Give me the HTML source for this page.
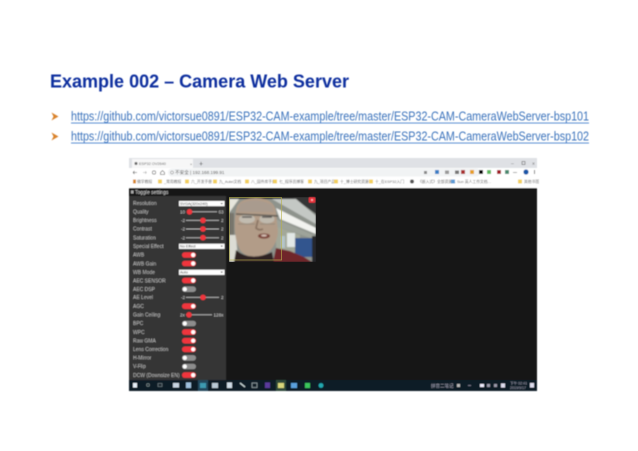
<!DOCTYPE html>
<html lang="en">
<head>
<meta charset="utf-8">
<title>Example 002 – Camera Web Server</title>
<style>
html,body{margin:0;padding:0;background:#fff;width:638px;height:451px;overflow:hidden}
svg{display:block}
text{font-family:"Liberation Sans","Noto Sans CJK SC",sans-serif}
.l{font-size:5px;fill:#bdbdbd}
.m{font-size:4.6px;fill:#cfcfcf}
.b{font-size:3.8px;fill:#666}
.s{fill:#fff}
.st{font-size:3.8px;fill:#333}
.on{fill:#f0353c}
.off{fill:#8d8d8d}
.k{fill:#fff}
.tr{stroke:#b0b0b0;stroke-width:1}
.th{fill:#f0353c}
.lnk{font-size:12.5px;fill:#3a72bb}
</style>
</head>
<body>
<svg width="638" height="451" viewBox="0 0 638 451" xmlns="http://www.w3.org/2000/svg">
<defs>
<filter id="bl" x="-5%" y="-20%" width="110%" height="140%"><feGaussianBlur stdDeviation="0.4"/></filter>
<filter id="bs" x="-5%" y="-5%" width="110%" height="110%"><feGaussianBlur stdDeviation="0.5"/></filter>
<filter id="bf" x="-10%" y="-10%" width="120%" height="120%"><feGaussianBlur stdDeviation="0.9"/></filter>
<clipPath id="cam"><rect x="229" y="197" width="87" height="65"/></clipPath>
</defs>
<rect width="638" height="451" fill="#fff"/>

<g filter="url(#bl)">
<text x="50" y="87.5" font-size="18.5" font-weight="700" fill="#0b2e9e" textLength="299" lengthAdjust="spacingAndGlyphs">Example 002 – Camera Web Server</text>
<path d="M51.5 112.5l7 4-7 4 2-4z" fill="#d9822b"/>
<path d="M51.5 132.5l7 4-7 4 2-4z" fill="#d9822b"/>
<text class="lnk" x="71" y="120.5" textLength="518" lengthAdjust="spacingAndGlyphs">https://github.com/victorsue0891/ESP32-CAM-example/tree/master/ESP32-CAM-CameraWebServer-bsp101</text>
<rect x="71" y="122.6" width="518" height="0.9" fill="#4a82cc"/>
<text class="lnk" x="71" y="140.5" textLength="518" lengthAdjust="spacingAndGlyphs">https://github.com/victorsue0891/ESP32-CAM-example/tree/master/ESP32-CAM-CameraWebServer-bsp102</text>
<rect x="71" y="142.6" width="518" height="0.9" fill="#4a82cc"/>
</g>

<g filter="url(#bs)">
<!-- browser chrome -->
<rect x="129" y="158" width="408" height="10" fill="#dfe1e5"/>
<rect x="129" y="168" width="408" height="20" fill="#fff"/>
<rect x="132" y="159" width="61" height="9" fill="#f7f7f7"/>
<circle cx="136" cy="163.5" r="1.5" fill="#666"/>
<text class="b" x="139" y="165">ESP32 OV2640</text>
<text class="b" x="190" y="165.5">×</text>
<text x="199" y="166" font-size="7" fill="#444">+</text>
<text x="511" y="165" font-size="5" fill="#666">–</text>
<rect x="522" y="161.5" width="3" height="3" fill="none" stroke="#666" stroke-width=".6"/>
<text x="532" y="165.5" font-size="5" fill="#666">×</text>

<path d="M133 172.5h4M133 172.5l1.5-1.5M133 172.5l1.5 1.5" stroke="#555" stroke-width=".6" fill="none"/>
<path d="M143 172.5h3.5M146.5 172.5l-1.2-1.2M146.5 172.5l-1.2 1.2" stroke="#aaa" stroke-width=".6" fill="none"/>
<circle cx="154" cy="172.5" r="1.7" fill="none" stroke="#555" stroke-width=".6"/>
<path d="M160.5 172.5l2-2 2 2v2h-4z" fill="none" stroke="#555" stroke-width=".6"/>
<rect x="168" y="168.5" width="312" height="8" rx="4" fill="#f1f3f4"/>
<circle cx="172" cy="172.5" r="1.5" fill="none" stroke="#666" stroke-width=".5"/>
<text x="175" y="174.2" font-size="4.6" fill="#555">不安全 | 192.168.199.91</text>
<rect x="424" y="171" width="3" height="3" fill="#888"/>
<rect x="435" y="170" width="4" height="4" fill="#3a7fc5"/>
<rect x="445" y="170.5" width="4" height="3.5" fill="#999"/>
<rect x="455" y="170.5" width="4" height="3.5" fill="#777"/>
<rect x="461" y="170" width="4" height="4" fill="#a33"/>
<rect x="470" y="170" width="4" height="4" fill="#e6a02c"/>
<rect x="479" y="170" width="4" height="4" fill="#111"/>
<rect x="487" y="170" width="4" height="4" fill="#5cb85c"/>
<rect x="497" y="170" width="4" height="4" fill="#a3202c"/>
<rect x="505" y="170" width="4" height="4" fill="#4a8a70"/>
<rect x="513" y="172" width="4" height="1" fill="#aaa"/>
<circle cx="526" cy="172" r="2.6" fill="#1257a8"/>
<rect x="534" y="170" width="1" height="4" fill="#777"/>

<!-- bookmarks -->
<rect x="133" y="179.5" width="3" height="4" fill="#d88a2c"/>
<text class="b" x="137" y="183">佛学教程</text>
<rect x="158" y="179.5" width="4" height="4" fill="#f2cf5b"/><text class="b" x="164" y="183">_常用教程</text>
<rect x="185" y="179.5" width="4" height="4" fill="#f2cf5b"/><text class="b" x="191" y="183">六_开发手册</text>
<rect x="213" y="179.5" width="4" height="4" fill="#f2cf5b"/><text class="b" x="219" y="183">九_Autel文档</text>
<rect x="245" y="179.5" width="4" height="4" fill="#f2cf5b"/><text class="b" x="251" y="183">八_固件库手册</text>
<rect x="273" y="179.5" width="4" height="4" fill="#f2cf5b"/><text class="b" x="279" y="183">七_程序员博客</text>
<rect x="308" y="179.5" width="4" height="4" fill="#f2cf5b"/><text class="b" x="314" y="183">九_项目产品</text>
<rect x="334" y="179.5" width="4" height="4" fill="#f2cf5b"/><text class="b" x="340" y="183">十_博士研究资源</text>
<rect x="369" y="179.5" width="4" height="4" fill="#f2cf5b"/><text class="b" x="375" y="183">十_在ESP32入门</text>
<circle cx="412" cy="181.5" r="2" fill="#555"/><text class="b" x="418" y="183">《嵌入式》全部资源…</text>
<rect x="451" y="179.5" width="4" height="4" fill="#5b9bd5"/><text class="b" x="457" y="183">Sun 英人工作文档…</text>
<rect x="518" y="179.5" width="4" height="4" fill="#f2cf5b"/><text class="b" x="524" y="183">其他书签</text>

<!-- page -->
<rect x="129" y="188" width="408" height="192" fill="#171717"/>
<rect x="129" y="188" width="97" height="192" fill="#363636"/>
<rect x="129" y="188" width="97" height="8" fill="#171717"/>
<rect x="131" y="190.5" width="2.5" height="3" fill="#aaa"/>
<text x="135" y="193.8" font-size="5" fill="#ddd">Toggle settings</text>

<!-- labels -->
<text class="l" x="133" y="205">Resolution</text>
<text class="l" x="133" y="213.5">Quality</text>
<text class="l" x="133" y="222">Brightness</text>
<text class="l" x="133" y="230.7">Contrast</text>
<text class="l" x="133" y="239.4">Saturation</text>
<text class="l" x="133" y="248">Special Effect</text>
<text class="l" x="133" y="256.7">AWB</text>
<text class="l" x="133" y="265.3">AWB Gain</text>
<text class="l" x="133" y="274">WB Mode</text>
<text class="l" x="133" y="282.3">AEC SENSOR</text>
<text class="l" x="133" y="291">AEC DSP</text>
<text class="l" x="133" y="299.2">AE Level</text>
<text class="l" x="133" y="307.8">AGC</text>
<text class="l" x="133" y="316.5">Gain Ceiling</text>
<text class="l" x="133" y="325.2">BPC</text>
<text class="l" x="133" y="333.8">WPC</text>
<text class="l" x="133" y="342.4">Raw GMA</text>
<text class="l" x="133" y="351">Lens Correction</text>
<text class="l" x="133" y="359.6">H-Mirror</text>
<text class="l" x="133" y="368.2">V-Flip</text>
<text class="l" x="133" y="376.9">DCW (Downsize EN)</text>

<!-- selects -->
<rect class="s" x="179" y="201" width="45.5" height="5.2"/><text class="st" x="180" y="205">SVGA(320x240)</text><path d="M220.5 203l1.2 1.4 1.2-1.4z" fill="#222"/>
<rect class="s" x="179" y="243.7" width="45.5" height="5.2"/><text class="st" x="180" y="247.6">No Effect</text><path d="M220.5 245.6l1.2 1.4 1.2-1.4z" fill="#222"/>
<rect class="s" x="179" y="269.7" width="45.5" height="5.2"/><text class="st" x="180" y="273.6">Auto</text><path d="M220.5 271.6l1.2 1.4 1.2-1.4z" fill="#222"/>

<!-- sliders -->
<text class="m" x="180" y="213.4">10</text><line class="tr" x1="187" y1="211.8" x2="217" y2="211.8"/><circle class="th" cx="189.5" cy="211.8" r="2.8"/><text class="m" x="218.5" y="213.4">63</text>
<text class="m" x="181" y="222">-2</text><line class="tr" x1="186" y1="220.4" x2="219" y2="220.4"/><circle class="th" cx="203" cy="220.4" r="2.8"/><text class="m" x="221" y="222">2</text>
<text class="m" x="181" y="230.6">-2</text><line class="tr" x1="186" y1="229" x2="219" y2="229"/><circle class="th" cx="203" cy="229" r="2.8"/><text class="m" x="221" y="230.6">2</text>
<text class="m" x="181" y="239.3">-2</text><line class="tr" x1="186" y1="237.7" x2="219" y2="237.7"/><circle class="th" cx="203" cy="237.7" r="2.8"/><text class="m" x="221" y="239.3">2</text>
<text class="m" x="181" y="299">-2</text><line class="tr" x1="186" y1="297.4" x2="219" y2="297.4"/><circle class="th" cx="203" cy="297.4" r="2.8"/><text class="m" x="221" y="299">2</text>
<text class="m" x="180" y="316.4">2x</text><line class="tr" x1="186" y1="314.8" x2="212" y2="314.8"/><circle class="th" cx="189" cy="314.8" r="2.8"/><text class="m" x="213.5" y="316.4">128x</text>

<!-- toggles -->
<rect class="on" x="182" y="252.2" width="14" height="5.6" rx="2.8"/><circle class="k" cx="193.2" cy="255" r="2.1"/>
<rect class="on" x="182" y="260.7" width="14" height="5.6" rx="2.8"/><circle class="k" cx="193.2" cy="263.5" r="2.1"/>
<rect class="on" x="182" y="277.7" width="14" height="5.6" rx="2.8"/><circle class="k" cx="193.2" cy="280.5" r="2.1"/>
<rect class="off" x="182" y="286.4" width="14" height="5.6" rx="2.8"/><circle class="k" cx="184.8" cy="289.2" r="2.1"/>
<rect class="on" x="182" y="303.4" width="14" height="5.6" rx="2.8"/><circle class="k" cx="193.2" cy="306.2" r="2.1"/>
<rect class="off" x="182" y="320.7" width="14" height="5.6" rx="2.8"/><circle class="k" cx="184.8" cy="323.5" r="2.1"/>
<rect class="on" x="182" y="329.3" width="14" height="5.6" rx="2.8"/><circle class="k" cx="193.2" cy="332.1" r="2.1"/>
<rect class="on" x="182" y="337.9" width="14" height="5.6" rx="2.8"/><circle class="k" cx="193.2" cy="340.7" r="2.1"/>
<rect class="on" x="182" y="346.5" width="14" height="5.6" rx="2.8"/><circle class="k" cx="193.2" cy="349.3" r="2.1"/>
<rect class="off" x="182" y="355.1" width="14" height="5.6" rx="2.8"/><circle class="k" cx="184.8" cy="357.9" r="2.1"/>
<rect class="off" x="182" y="363.7" width="14" height="5.6" rx="2.8"/><circle class="k" cx="184.8" cy="366.5" r="2.1"/>
<rect class="on" x="182" y="372.3" width="14" height="5.6" rx="2.8"/><circle class="k" cx="193.2" cy="375.1" r="2.1"/>

<!-- taskbar -->
<rect x="129" y="380" width="408" height="11" fill="#0f1b26"/>
<rect x="133" y="383" width="4" height="4.5" fill="#e8f0f8"/>
<circle cx="148" cy="385" r="1.5" fill="none" stroke="#9aa" stroke-width=".5"/>
<rect x="158" y="383.5" width="4" height="3" fill="none" stroke="#9aa" stroke-width=".5"/>
<rect x="173" y="383" width="6" height="4.5" fill="#c8d4e0"/>
<rect x="186" y="382.5" width="5" height="5.5" fill="#9fc0dc"/>
<rect x="198" y="380" width="10" height="11" fill="#24465c"/><rect x="200" y="383" width="6" height="5" fill="#3c9ab0"/>
<rect x="212" y="383" width="6" height="5" fill="#b9c8d4"/>
<rect x="227" y="382.5" width="5" height="5.5" fill="#cfdce6"/>
<path d="M240 383l5 4" stroke="#cdd" stroke-width="1.2"/>
<rect x="252" y="383" width="5" height="4.5" fill="none" stroke="#bcc" stroke-width=".6"/>
<rect x="265" y="382.5" width="5" height="5.5" fill="#5a3a9c"/>
<rect x="276" y="380" width="10" height="11" fill="#2f4a3a"/><rect x="278" y="383" width="6" height="5" fill="#d6d67a"/>
<rect x="291" y="383" width="6" height="5" fill="#5aa0dc"/>
<rect x="305" y="383" width="5" height="5" fill="#3bc45c"/>
<circle cx="321" cy="385.5" r="2.4" fill="#22a8b0"/>
<text x="431" y="387.5" font-size="4.5" fill="#aab">拼音二笔记</text>
<rect x="457" y="384" width="3" height="3" fill="#bbb"/>
<rect x="468" y="385" width="3" height="1" fill="#778"/>
<rect x="480" y="384" width="4" height="3" fill="#eef"/>
<rect x="487" y="384" width="3" height="3" fill="#99a"/>
<rect x="494" y="384" width="3" height="3" fill="#99a"/>
<rect x="501" y="383.5" width="4" height="4" fill="#dde"/>
<text x="510" y="384.5" font-size="3.6" fill="#aab">下午 02:41</text>
<text x="510" y="389" font-size="3.6" fill="#aab">2019/9/17</text>
<rect x="530" y="383" width="4" height="4.5" fill="#dde"/>
</g>

<!-- camera -->
<g clip-path="url(#cam)">
<g filter="url(#bf)">
<rect x="229" y="197" width="87" height="65" fill="#8e938c"/>
<!-- dark top band and corner -->
<rect x="229" y="197" width="87" height="2" fill="#2c2c2a"/>
<path d="M292 197H316V214z" fill="#343634"/>
<!-- ceiling panels -->
<path d="M272 199L296 199L316 216L316 224z" fill="#c4c8c4"/>
<path d="M276 208L316 228L316 234L280 219z" fill="#f2f3ef"/>
<path d="M276 219L316 236L316 240L276 226z" fill="#9ea39a"/>
<!-- wall -->
<path d="M276 226L300 235L300 262L276 262z" fill="#a3a899"/>
<!-- monitor/blue -->
<rect x="295" y="238" width="17" height="19" fill="#32558e"/>
<rect x="287" y="233" width="8" height="14" fill="#e2e8e6"/>
<rect x="281" y="236" width="4" height="12" fill="#b4c4c8"/>
<rect x="312" y="236" width="4" height="26" fill="#25282c"/>
<!-- left side -->
<path d="M229 199h10l-10 14z" fill="#e6e6dc"/>
<rect x="229" y="213" width="5" height="22" fill="#77756c"/>
<path d="M229 235h7l2 27h-9z" fill="#dcdcd4"/>
<!-- shirt -->
<path d="M273 262L276 248L290 251L304 257L312 262z" fill="#70262c"/>
<!-- head -->
<path d="M236 210Q238 198 256 198Q274 198 276 212L278 232Q276 250 262 256Q248 260 240 250Q232 235 236 210z" fill="#b29c88"/>
<path d="M240 204Q255 196 272 205L274 212L238 212z" fill="#a99b8e"/>
<path d="M236 250Q250 262 272 252L274 262L234 262z" fill="#2e2422"/>
<!-- glasses -->
<ellipse cx="247" cy="219" rx="8" ry="4.5" fill="#c2bcb0"/>
<ellipse cx="267" cy="219" rx="7.5" ry="4.5" fill="#c0baae"/>
<path d="M236 214L278 216" stroke="#5a5650" stroke-width="1.4"/>
<path d="M242 217L252 217" stroke="#4e4a48" stroke-width="1.4"/>
<path d="M262 217L272 217" stroke="#4e4a48" stroke-width="1.4"/>
<path d="M238 224L255 224M260 224L275 224" stroke="#8a8478" stroke-width=".8"/>
<!-- nose -->
<path d="M258 220L256 228Q259 231 263 229" stroke="#86705e" stroke-width="1.6" fill="none"/>
<!-- mouth -->
<ellipse cx="264" cy="236" rx="6" ry="2.6" fill="#7a4238"/>
<ellipse cx="264" cy="235.5" rx="3" ry="1" fill="#d8c4b8"/>
</g>
<rect x="229.5" y="197.5" width="52" height="62.5" fill="none" stroke="#b6b04a" stroke-width=".7" opacity=".9"/>
</g>
<g filter="url(#bs)">
<rect x="308.5" y="197" width="7" height="6" rx="1.5" fill="#e8303a"/>
<circle cx="312" cy="200" r="1" fill="#fbb"/>
</g>
</svg>
</body>
</html>
